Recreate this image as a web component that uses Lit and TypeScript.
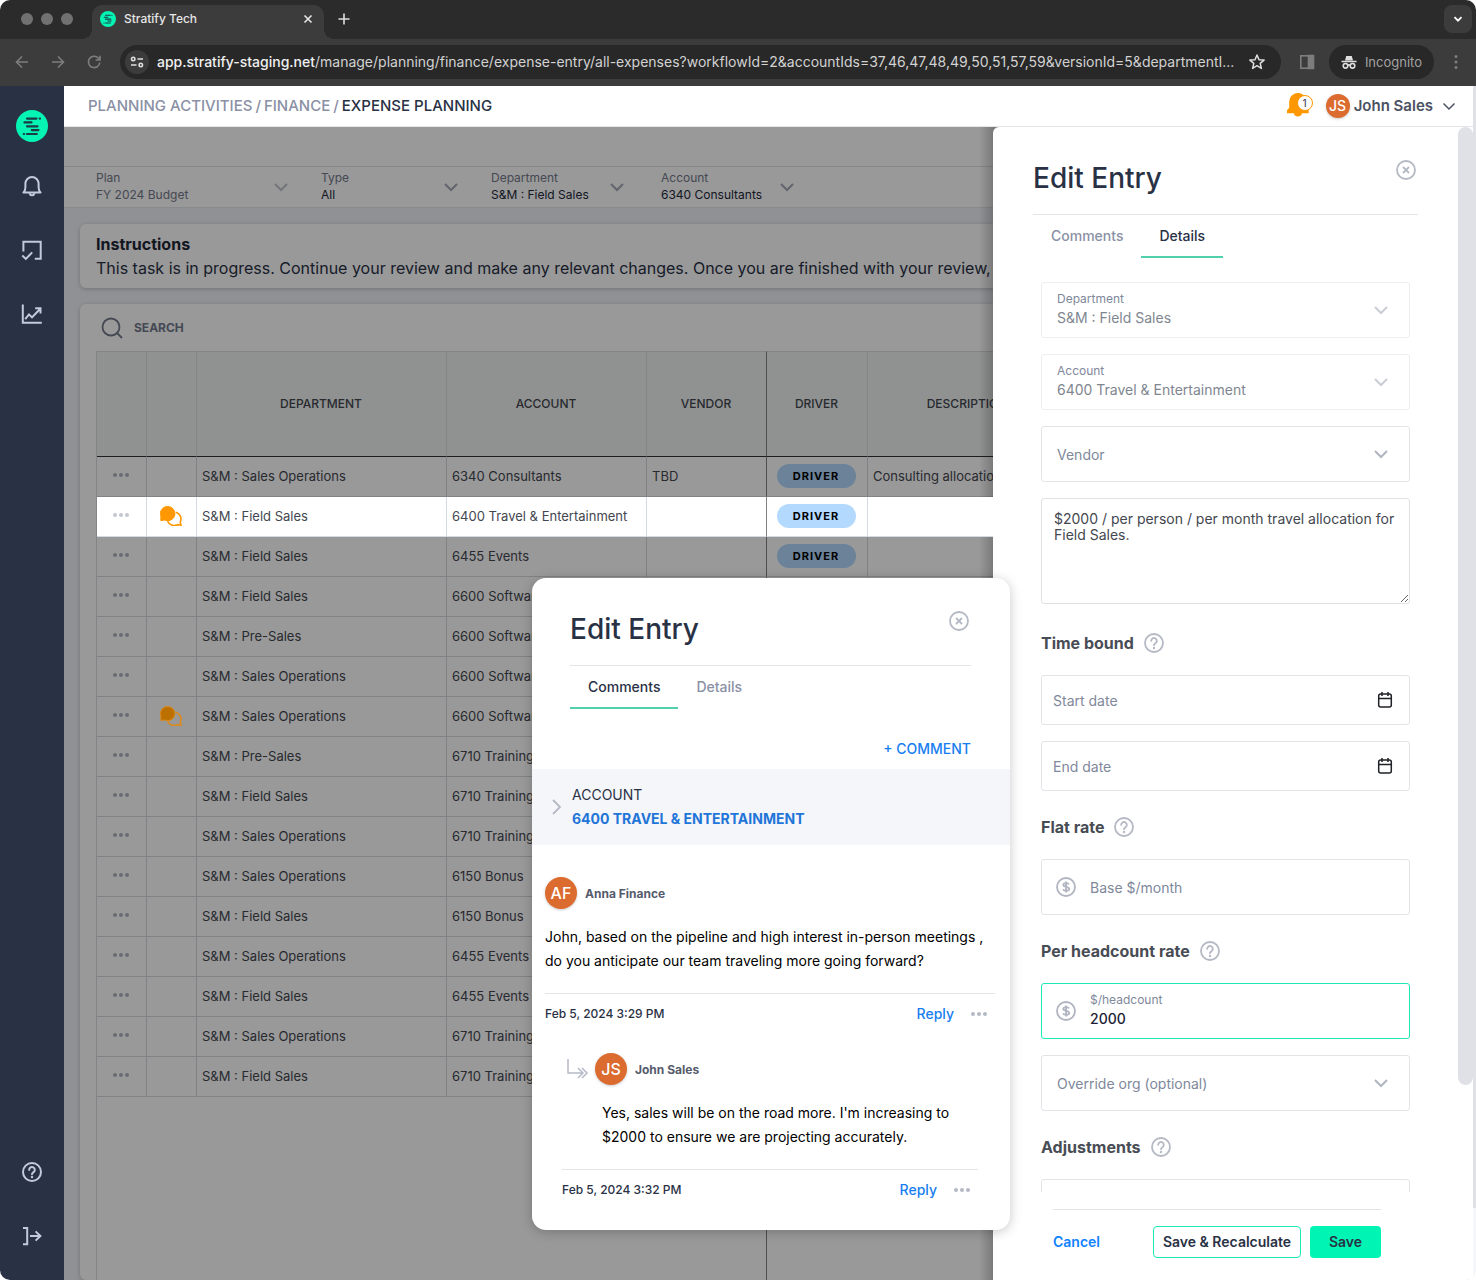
import { LitElement, html, svg, css, nothing } from "lit";
import { customElement } from "lit/decorators.js";
import { classMap } from "lit/directives/class-map.js";

interface Row {
  department: string;
  account: string;
  vendor?: string;
  driver?: boolean;
  description?: string;
  comments?: boolean;
  active?: boolean;
}

const OPS = "S&M : Sales Operations";
const FIELD = "S&M : Field Sales";
const PRE = "S&M : Pre-Sales";

const ROWS: Row[] = [
  { department: OPS, account: "6340 Consultants", vendor: "TBD", driver: true, description: "Consulting allocation" },
  { department: FIELD, account: "6400 Travel & Entertainment", driver: true, comments: true, active: true },
  { department: FIELD, account: "6455 Events", driver: true },
  { department: FIELD, account: "6600 Software" },
  { department: PRE, account: "6600 Software" },
  { department: OPS, account: "6600 Software" },
  { department: OPS, account: "6600 Software", comments: true },
  { department: PRE, account: "6710 Training" },
  { department: FIELD, account: "6710 Training" },
  { department: OPS, account: "6710 Training" },
  { department: OPS, account: "6150 Bonus" },
  { department: FIELD, account: "6150 Bonus" },
  { department: OPS, account: "6455 Events" },
  { department: FIELD, account: "6455 Events" },
  { department: OPS, account: "6710 Training" },
  { department: FIELD, account: "6710 Training" },
];

const icon = (size: number, body: unknown, width = 2, box = 24) => html`<svg
  class="icon" width=${size} height=${size} viewBox="0 0 ${box} ${box}" fill="none"
  stroke="currentColor" stroke-width=${width} aria-hidden="true">${body}</svg>`;

const logo = (size: number) => html`<svg class="icon" width=${size} height=${size} viewBox="0 0 32 32" aria-hidden="true">
  <circle cx="16" cy="16" r="16" fill="#05f3b3"></circle>
  <g stroke="#1d3a47" stroke-width="2.2" stroke-linecap="round">
    <path d="M11 8.6H20.5M23.7 8.6H24M8.5 12.4H15.5M11 16.3H21.5M15.8 20.1H22.4M7.8 24H8.1M11 24H20.8"></path>
  </g>
</svg>`;

const bell = svg`<path d="M3.4 18.6h17.2c-1.5-1.6-2-2.8-2-5.1V9.6a6.6 6.6 0 0 0-13.2 0v3.9c0 2.3-.5 3.5-2 5.1z" stroke-linejoin="round"/><path d="M9.4 19.2a2.7 2.7 0 0 0 5.2 0"/>`;
const task = svg`<path d="M3.4 13.6V3.8h17.3v16.9h-5.9"/><path d="M2.3 17.6 5.8 20.9 12.2 14.4"/>`;
const chart = svg`<path d="M2.8 2.4v18.3h19"/><path d="M5.2 17.2 9 12.4l3 3 7.8-8.2M15.2 6.2h5.3v5.3"/>`;
const help = svg`<circle cx="12" cy="12" r="9"/><path d="M9.2 9.9a2.8 2.8 0 1 1 4.4 2.2c-1 .7-1.6 1.1-1.6 2.1" stroke-linecap="round"/><circle cx="12" cy="17" r="1.2" fill="currentColor" stroke="none"/>`;
const leave = svg`<path d="M3 4h4.2v16.2H3M10 12h10.4M15.6 7.4l4.8 4.6-4.8 4.6"/>`;
const closeRing = svg`<circle cx="12" cy="12" r="9"/><path d="M9 9l6 6M15 9l-6 6"/>`;
const down = svg`<path d="M6 9l6 6 6-6"/>`;
const dots = svg`<g fill="currentColor" stroke="none"><circle cx="6" cy="12" r="2"/><circle cx="12" cy="12" r="2"/><circle cx="18" cy="12" r="2"/></g>`;
const dollar = svg`<circle cx="12" cy="12" r="9"/><path d="M15 9.4c-.5-.9-1.5-1.3-2.8-1.3-1.7 0-2.9.7-2.9 1.9 0 2.7 5.9 1.2 5.9 4 0 1.2-1.3 1.9-3 1.9-1.5 0-2.7-.5-3.2-1.5M12.1 6.5v11"/>`;
const calendar = svg`<rect x="5.7" y="6" width="12.6" height="13" rx="2"/><path d="M5.7 10.5h12.6M9 4v4M15 4v4"/>`;

const commentIcon = (muted: boolean) => html`<svg class="icon bubbles" width="22" height="20" viewBox="0 0 22 20" aria-hidden="true">
  <path d="M15.8 6.2a6.9 6.9 0 0 1 4.4 9.8l.8 3.2-3.6-.6a7 7 0 0 1-9.9-3.6" fill="none"
    stroke=${muted ? "#dc8a1c" : "#ff9800"} stroke-width="1.6"></path>
  <path d="M7.8.5a7.1 7.1 0 1 1-3 13.5L.8 14.6.9 10.2A7.1 7.1 0 0 1 7.8.5z"
    fill=${muted ? "#bb7000" : "#ff9800"} stroke=${muted ? "#dc8a1c" : "#ff9800"} stroke-width="1"></path>
</svg>`;

@customElement("browser-bar")
class BrowserBar extends LitElement {
  static styles = css`
    :host { display: block; color: #dedede; }
    .icon { display: block; flex: none; }
    button { background: none; border: 0; padding: 0; color: inherit; font: inherit; display: flex; align-items: center; justify-content: center; }
    .strip { display: flex; align-items: flex-end; height: 39px; background: #2b2b2b; padding-right: 4px; }
    .lights { display: flex; gap: 8px; padding: 0 19px 14px 21px; }
    .light { width: 12px; height: 12px; border-radius: 50%; background: #717171; }
    .tab { position: relative; display: flex; align-items: center; width: 232px; height: 34px; box-sizing: border-box; padding: 0 10px 6px 8px; background: #3c3c3c; border-radius: 10px 10px 0 0; font-size: 12px; font-weight: 500; gap: 8px; color: #e6e6e6; }
    .tab::before, .tab::after { content: ""; position: absolute; bottom: 0; width: 10px; height: 10px; }
    .tab::before { left: -10px; background: radial-gradient(circle at 0 0, #2b2b2b 10px, #3c3c3c 10px); }
    .tab::after { right: -10px; background: radial-gradient(circle at 100% 0, #2b2b2b 10px, #3c3c3c 10px); }
    .title { flex: 1; padding-bottom: 2px; }
    .plus { width: 24px; height: 40px; margin-left: 8px; }
    .menu { width: 28px; height: 28px; border-radius: 8px; background: #3c3c3c; margin: 0 0 6px auto; color: #fff; }
    .bar { display: flex; align-items: center; height: 47px; background: #3c3c3c; padding: 0 8px 2px 10px; box-sizing: border-box; }
    .nav { display: flex; gap: 12px; color: #7d7d7d; margin-right: 14px; }
    .nav button { width: 24px; height: 24px; }
    .address { display: flex; align-items: center; flex: 1; min-width: 0; height: 34px; border-radius: 17px; background: #282828; padding: 0 15px 0 5px; margin-right: 14px; box-sizing: border-box; }
    .site { width: 24px; height: 24px; border-radius: 50%; background: #3c3c3c; margin-right: 8px; flex: none; }
    .url { flex: 1; min-width: 0; white-space: nowrap; overflow: hidden; font-size: 14px; line-height: 20px; color: #d2d2d2; outline: none; }
    .host { color: #f0f0f0; font-weight: 500; }
    .panel { width: 24px; height: 24px; color: #7d7d7d; margin-right: 10px; }
    .incognito { display: flex; align-items: center; gap: 7px; height: 34px; padding: 0 12px 0 11px; border-radius: 17px; background: #282828; font-size: 13px; color: #a2a2a2; margin-right: 10px; }
    .incognito .icon { color: #dedede; }
    .more { width: 24px; height: 24px; color: #7d7d7d; }
  `;

  render() {
    return html`
      <div class="strip">
        <div class="lights"><span class="light"></span><span class="light"></span><span class="light"></span></div>
        <div class="tab">
          ${logo(16)}<span class="title">Stratify Tech</span>
          <button aria-label="Close tab">${icon(12, svg`<path d="M2.5 2.5l7 7M9.5 2.5l-7 7"/>`, 1.6, 12)}</button>
        </div>
        <button class="plus" aria-label="New tab">${icon(12, svg`<path d="M6 .5v11M.5 6h11"/>`, 1.6, 12)}</button>
        <button class="menu" aria-label="Search tabs">${icon(12, svg`<path d="M2.5 4.2 6 7.7l3.5-3.5"/>`, 1.8, 12)}</button>
      </div>
      <div class="bar">
        <div class="nav">
          <button aria-label="Back">${icon(16, svg`<path d="M14 8H2.5M8 2.5 2.5 8 8 13.5"/>`, 1.6, 16)}</button>
          <button aria-label="Forward">${icon(16, svg`<path d="M2 8h11.5M8 2.5 13.5 8 8 13.5"/>`, 1.6, 16)}</button>
          <button aria-label="Reload">${icon(16, svg`<path d="M13.8 8.5A5.7 5.7 0 1 1 12.3 4l1.5 1.6M14 1.8v4.2H9.6"/>`, 1.6, 16)}</button>
        </div>
        <div class="address">
          <button class="site" aria-label="Site settings">${icon(14, svg`<circle cx="3.2" cy="4" r="1.7"/><path d="M7.5 4H13M1 10h5.5"/><circle cx="10.8" cy="10" r="1.7"/>`, 1.6, 14)}</button>
          <div class="url" role="textbox" aria-label="Address" contenteditable="true"><span class="host">app.stratify-staging.net</span>/manage/planning/finance/expense-entry/all-expenses?workflowId=2&accountIds=37,46,47,48,49,50,51,57,59&versionId=5&departmentI...</div>
          <button aria-label="Bookmark">${icon(18, svg`<path d="M9 2l2 4.7 5.1.4-3.9 3.3 1.2 5L9 12.7l-4.4 2.7 1.2-5L1.9 7.1 7 6.7z" stroke-linejoin="round"/>`, 1.5, 18)}</button>
        </div>
        <button class="panel" aria-label="Side panel">${icon(16, svg`<rect x="1.8" y="1.8" width="12.4" height="12.4"/><path d="M9.5 1.5h5v13h-5z" fill="currentColor"/>`, 1.6, 16)}</button>
        <div class="incognito">${icon(18, svg`<path d="M5 7.5 6.2 3h5.6L13 7.5z" fill="currentColor" stroke="none"/><path d="M1.5 8.5h15"/><circle cx="5.5" cy="12.8" r="2.3"/><circle cx="12.5" cy="12.8" r="2.3"/><path d="M7.6 12.3q1.4-.8 2.8 0"/>`, 1.6, 18)}<span>Incognito</span></div>
        <button class="more" aria-label="Browser menu">${icon(16, svg`<g fill="currentColor" stroke="none"><circle cx="8" cy="2.5" r="1.5"/><circle cx="8" cy="8" r="1.5"/><circle cx="8" cy="13.5" r="1.5"/></g>`, 1, 16)}</button>
      </div>
    `;
  }
}

@customElement("app-root")
class AppRoot extends LitElement {
  static styles = css`
    :host { display: block; font-family: Inter, "Liberation Sans", sans-serif; background: #fff; }
    * { box-sizing: border-box; }
    .icon { display: block; flex: none; }
    button, select, input, textarea { font: inherit; color: inherit; background: none; border: 0; padding: 0; margin: 0; outline: none; }
    button { display: flex; align-items: center; justify-content: center; }
    select { appearance: none; opacity: 1; }
    h1, h2, p { margin: 0; }
    a { color: inherit; text-decoration: none; }
    .window { display: flex; flex-direction: column; height: 100vh; border-radius: 10px; overflow: hidden; }
    .app { flex: 1; min-height: 0; display: flex; }

    .side { width: 64px; background: #293145; color: #c3cadb; display: flex; flex-direction: column; padding: 24px 0 12px; }
    .brand { display: flex; justify-content: center; padding-bottom: 12px; }
    .side button { width: 64px; height: 64px; }
    .side .push { margin-top: auto; }

    .page { flex: 1; min-width: 0; display: flex; flex-direction: column; }
    .rail { width: 3px; background: #f6f7fa; }
    .rail-thumb { height: 94%; background: #e0e1e6; }
    .top { display: flex; align-items: center; height: 41px; border-bottom: 1px solid #e5e6ea; padding: 0 16px 0 24px; color: #293145; font-size: 15px; }
    .crumbs { display: flex; gap: 3px; font-weight: 500; color: #8a90a5; padding-bottom: 2px; }
    .crumbs .here { color: #293145; }
    .account { margin-left: auto; display: flex; align-items: center; font-weight: 600; color: #4b5163; }
    .alert { position: relative; width: 26px; height: 26px; margin-right: 13px; }
    .count { position: absolute; left: 10px; top: 2px; width: 16px; height: 16px; border-radius: 50%; border: 1px solid #ff9800; background: #fff; font-size: 10px; line-height: 14px; text-align: center; font-weight: 500; }
    .avatar { width: 32px; height: 32px; border-radius: 50%; background: #db6b2e; color: #fff; font-size: 16px; font-weight: 500; line-height: 32px; text-align: center; flex: none; box-shadow: 0 1px 3px rgba(0, 0, 0, 0.2); }
    .avatar.small { width: 24px; height: 24px; line-height: 24px; font-size: 14px; margin-right: 4px; }
    .person { padding-bottom: 1px; }
    .account .icon { margin-left: 8px; }
    .account .alert .icon { margin: 0; }

    .stage { position: relative; flex: 1; min-height: 0; display: flex; flex-direction: column; overflow: hidden; background: #f0f2f8; }
    .band { height: 40px; flex: none; background: #fff; border-bottom: 1px solid #dfe2e8; }
    .filters { display: flex; height: 41px; flex: none; background: #fff; border-bottom: 1px solid #e2e4ea; padding-left: 32px; font-size: 12px; color: #23283a; }
    .filter { display: flex; align-items: center; width: 170px; padding-right: 32px; }
    .filter.wide { width: 225px; }
    .filter.wide, .filter.mid { padding-right: 28px; }
    .filter div { flex: 1; min-width: 0; padding-bottom: 2px; }
    .filter label { display: block; line-height: 17px; color: #747a8b; }
    .filter select { display: block; width: 100%; height: 17px; line-height: 17px; }
    .filter select:disabled { color: #747a8b; }
    .filter .icon { color: #a3a8b6; }
    .filter.wide .icon { color: #c0c4ce; }
    .cards { flex: 1; min-height: 0; display: flex; flex-direction: column; gap: 16px; padding: 16px 0 0 16px; }
    .card { background: #fff; border-radius: 6px 0 0 6px; box-shadow: 0 1px 4px rgba(30, 35, 60, 0.25); padding: 0 16px; }
    .note { height: 64px; flex: none; padding-top: 8px; font-size: 16px; line-height: 24px; color: #293145; white-space: nowrap; overflow: hidden; }
    .note h2 { font-size: 16px; font-weight: 700; color: #1f2636; }
    .sheet { flex: 1; min-height: 0; display: flex; flex-direction: column; padding-right: 0; }
    .search { display: flex; align-items: center; height: 47px; gap: 10px; padding-left: 4px; color: #747a8b; flex: none; }
    .search input { font-size: 12px; font-weight: 700; width: 200px; }
    .search input::placeholder { color: #747a8b; opacity: 1; }
    .grid { flex: 1; min-height: 0; display: flex; flex-direction: column; border-left: 1px solid #d9dce2; }
    table { table-layout: fixed; width: 971px; border-spacing: 0; font-size: 13px; color: #43474f; flex: none; }
    th { height: 106px; padding: 0 1px 2px 0; background: #eff3f2; border: 0 solid #d9dde2; border-width: 1px 1px 1px 0; border-bottom-color: #2d3136; font-size: 12px; font-weight: 500; color: #43474f; }
    td { height: 40px; padding: 0 4px 1px 5px; border: 0 solid #d5d9e0; border-width: 0 1px 1px 0; white-space: nowrap; overflow: hidden; }
    td.split, th.split { border-right-color: #828282; }
    td.mid { padding: 0 2px 2px 0; }
    .mid > * { margin: 0 auto; }
    .actions { color: #b0b4bf; width: 24px; height: 24px; padding-bottom: 2px; }
    .c-menu, .c-chat { width: 50px; }
    .c-dept { width: 250px; }
    .c-acct { width: 200px; }
    .c-vend { width: 120px; }
    .c-driv { width: 101px; }
    .active { position: relative; z-index: 2; }
    .active td { background: #fff; }
    .active .actions { color: #c3c7d0; }
    .bubbles { position: relative; z-index: 2; }
    .pill { display: block; width: 79px; height: 24px; border-radius: 12px; background: #b3d9ff; color: #000; font-size: 11px; font-weight: 700; letter-spacing: 1px; line-height: 24px; text-align: center; }
    .rest { flex: 1; width: 670px; border-right: 1px solid #828282; }
    .scrim { position: absolute; inset: 0 470px 0 0; z-index: 1; background: linear-gradient(to left, rgba(0, 0, 0, 0.2) 10px, transparent 24px), rgba(0, 0, 0, 0.4); }

    .drawer { position: absolute; top: 0; right: 0; bottom: 0; width: 480px; z-index: 3; background: #fff; border-top-left-radius: 6px; display: flex; flex-direction: column; }
    .body { flex: 1; min-height: 0; overflow: hidden; padding: 31px 55px 0 40px; }
    .thumb { position: absolute; right: 0; top: 0; bottom: 195px; width: 15px; border-radius: 8px; background: #e0e1e6; }
    .head { display: flex; justify-content: space-between; align-items: flex-start; padding-bottom: 16px; border-bottom: 1px solid #e4e5e9; color: #293145; }
    .head h1 { font-size: 28px; font-weight: 500; line-height: 40px; }
    .head button { color: #b4b9c4; }
    .tabs { display: flex; font-size: 14px; font-weight: 500; color: #8a90a5; }
    .tabs button { height: 43px; padding: 0 18px; border-bottom: 2px solid transparent; }
    .tabs .on { color: #293145; border-color: #51d0ad; }
    .form { display: flex; flex-direction: column; gap: 16px; padding: 24px 8px 0; font-size: 14px; color: #80889b; }
    .field { display: flex; align-items: center; height: 56px; flex: none; border: 1px solid #e2e4e8; border-radius: 3px; padding: 0 16px 0 15px; }
    .field.off { border-color: #edeef1; }
    .field.off > .icon { opacity: 0.65; }
    .field > .icon { color: #b0b5c1; }
    .field .stack { flex: 1; min-width: 0; }
    .field label { display: block; font-size: 12px; line-height: 16px; }
    .field select, .field input { display: block; width: 100%; height: 20px; line-height: 20px; margin-top: 1px; }
    .field label + select, .field label + input { margin-bottom: 2px; }
    .field select:disabled { color: #80868f; }
    .field input::placeholder { color: #80889b; opacity: 1; }
    .field.date { height: 50px; padding: 0 12px 0 11px; }
    .field.date .icon { color: #1f2227; }
    .field.money { padding-left: 12px; gap: 12px; }
    .field.focus { border-color: #1de9b6; }
    .field.focus input { color: #1c2233; font-weight: 500; }
    .memo { display: block; width: 100%; height: 106px; margin-bottom: 3px; border: 1px solid #dfe1e5; border-radius: 3px; padding: 12px; line-height: 16px; color: #43474f; resize: vertical; flex: none; }
    .section { display: flex; align-items: center; gap: 8px; height: 36px; padding: 8px 0 4px; flex: none; font-size: 16px; font-weight: 700; color: #484c54; }
    .section .icon { color: #b4b9c4; }
    .foot { display: flex; align-items: center; gap: 9px; margin: 17px 92px 0 60px; padding: 16px 0 22px; border-top: 1px solid #e2e3e7; font-size: 14px; font-weight: 600; flex: none; }
    .foot button { height: 32px; padding-bottom: 2px; border-radius: 4px; color: #293145; }
    .foot .cancel { color: #0f82ff; margin-right: auto; }
    .foot .recalc { width: 148px; border: 1px solid #1de9b6; }
    .foot .save { width: 71px; background: #00f5b4; }

    .popup { position: absolute; right: 463px; bottom: 50px; width: 478px; z-index: 4; background: #fff; border-radius: 14px; box-shadow: 0 2px 12px rgba(0, 0, 0, 0.22); padding: 31px 0 21px; font-size: 14px; color: #000; }
    .popup-head { padding: 0 39px 0 38px; }
    .add { display: flex; justify-content: flex-end; padding: 28px 39px 8px; }
    .add button, .reply-link { color: #177ef0; font-weight: 500; line-height: 24px; }
    .target { display: flex; align-items: center; gap: 4px; background: #f5f6fa; padding: 14px 12px; line-height: 24px; color: #293145; }
    .target .expand { color: #b4b9c4; }
    .target a { display: block; color: #1f75d8; font-weight: 700; }
    .thread { padding: 32px 15px 0 13px; }
    .who { display: flex; align-items: center; gap: 8px; font-size: 12px; font-weight: 700; color: #555b6b; }
    .say { padding: 16px 0 20px; line-height: 24px; }
    .meta { display: flex; align-items: center; height: 40px; border-top: 1px solid #e4e5e9; font-size: 12px; font-weight: 500; color: #293145; }
    .meta .reply-link { margin-left: auto; font-size: 14px; }
    .meta .dots { width: 24px; height: 24px; margin: 0 4px 0 13px; color: #b4b9c4; }
    .nested { margin: 20px 17px 0; }
    .nested .who { padding-left: 4px; }
    .nested .who .icon { color: #b6bac9; margin-right: -3px; }
    .nested .say { padding-left: 40px; }
  `;

  private panelHead(active: string) {
    return html`
      <header class="head">
        <h1>Edit Entry</h1>
        <button aria-label="Close">${icon(24, closeRing, 1.8)}</button>
      </header>
      <div class="tabs" role="tablist">
        ${["Comments", "Details"].map((name) => html`<button role="tab" aria-selected=${name === active}
          class=${classMap({ on: name === active })}>${name}</button>`)}
      </div>`;
  }

  private filter(id: string, label: string, value: string, size: string, disabled = false) {
    return html`<div class="filter ${size}">
      <div><label for=${id}>${label}</label>
        <select id=${id} ?disabled=${disabled}><option>${value}</option></select></div>
      ${icon(24, down)}
    </div>`;
  }

  private row(r: Row) {
    return html`<tr class=${classMap({ active: !!r.active })}>
      <td class="mid"><button class="actions" aria-label="Row actions">${icon(24, dots)}</button></td>
      <td class="mid">${r.comments ? commentIcon(!r.active) : nothing}</td>
      <td>${r.department}</td>
      <td>${r.account}</td>
      <td class="split">${r.vendor ?? nothing}</td>
      <td class="mid">${r.driver ? html`<span class="pill">DRIVER</span>` : nothing}</td>
      <td>${r.description ?? nothing}</td>
    </tr>`;
  }

  private section(title: string) {
    return html`<div class="section"><span>${title}</span><button aria-label="About ${title}">${icon(24, help, 1.8)}</button></div>`;
  }

  private picker(id: string, label: string, value: string) {
    return html`<div class="field off">
      <div class="stack"><label for=${id}>${label}</label>
        <select id=${id} disabled><option>${value}</option></select></div>
      ${icon(24, down)}
    </div>`;
  }

  private emptyPicker(label: string) {
    return html`<div class="field"><div class="stack"><select aria-label=${label}><option>${label}</option></select></div>${icon(24, down)}</div>`;
  }

  private dateField(label: string) {
    return html`<div class="field date"><div class="stack"><input aria-label=${label} placeholder=${label} /></div>${icon(24, calendar, 1.5)}</div>`;
  }

  render() {
    return html`
      <div class="window">
        <browser-bar></browser-bar>
        <div class="app">
          <nav class="side" aria-label="Main">
            <a class="brand" href="#" aria-label="Stratify">${logo(32)}</a>
            <button aria-label="Notifications">${icon(24, bell)}</button>
            <button aria-label="Tasks">${icon(24, task)}</button>
            <button aria-label="Reports">${icon(24, chart)}</button>
            <button class="push" aria-label="Help">${icon(24, help)}</button>
            <button aria-label="Sign out">${icon(24, leave)}</button>
          </nav>
          <div class="page">
            <header class="top">
              <nav class="crumbs" aria-label="Breadcrumb">
                <a href="#">PLANNING ACTIVITIES</a><span>/</span><a href="#">FINANCE</a><span>/</span><span class="here">EXPENSE PLANNING</span>
              </nav>
              <div class="account">
                <button class="alert" aria-label="Alerts">
                  <svg class="icon" width="26" height="26" viewBox="0 0 26 26" aria-hidden="true"><path fill="#ff9800" d="M11 0a8.5 8.5 0 0 1 8.7 8.5v6.2l2 2.6v3H15a4.2 4.2 0 0 1-8.2 0H0v-3l2.200-2.600V8.500A8.500 8.500 0 0 1 11 0z"></path></svg>
                  <span class="count">1</span>
                </button>
                <span class="avatar small">JS</span><span class="person">John Sales</span>
                ${icon(16, svg`<path d="M2.5 5.5 8 11l5.5-5.5"/>`, 1.5, 16)}
              </div>
            </header>
            <div class="stage">
              <div class="band"></div>
              <div class="filters">
                ${this.filter("plan", "Plan", "FY 2024 Budget", "wide", true)}
                ${this.filter("type", "Type", "All", "mid")}
                ${this.filter("dept", "Department", FIELD, "")}
                ${this.filter("acct", "Account", "6340 Consultants", "")}
              </div>
              <div class="cards">
                <section class="card note">
                  <h2>Instructions</h2>
                  <p>This task is in progress. Continue your review and make any relevant changes. Once you are finished with your review,</p>
                </section>
                <section class="card sheet">
                  <div class="search">
                    ${icon(24, svg`<circle cx="11" cy="11" r="8.5"/><path d="M17 17l5 5"/>`, 1.8)}
                    <input type="search" aria-label="Search" placeholder="SEARCH" />
                  </div>
                  <div class="grid">
                    <table>
                      <thead><tr>
                        <th class="c-menu"></th><th class="c-chat"></th><th class="c-dept">DEPARTMENT</th>
                        <th class="c-acct">ACCOUNT</th><th class="c-vend split">VENDOR</th>
                        <th class="c-driv">DRIVER</th><th>DESCRIPTION</th>
                      </tr></thead>
                      <tbody>${ROWS.map((r) => this.row(r))}</tbody>
                    </table>
                    <div class="rest"></div>
                  </div>
                </section>
              </div>
              <div class="scrim"></div>

              <aside class="drawer">
                <div class="body">
                  ${this.panelHead("Details")}
                  <div class="form">
                    ${this.picker("e-dept", "Department", FIELD)}
                    ${this.picker("e-acct", "Account", "6400 Travel & Entertainment")}
                    ${this.emptyPicker("Vendor")}
                    <textarea class="memo" aria-label="Description" .value=${"$2000 / per person / per month travel allocation for Field Sales."}></textarea>
                    ${this.section("Time bound")}
                    ${this.dateField("Start date")}
                    ${this.dateField("End date")}
                    ${this.section("Flat rate")}
                    <div class="field money">${icon(24, dollar, 1.8)}<div class="stack"><input aria-label="Base $/month" placeholder="Base $/month" /></div></div>
                    ${this.section("Per headcount rate")}
                    <div class="field money focus">${icon(24, dollar, 1.8)}<div class="stack"><label for="head">$/headcount</label><input id="head" .value=${"2000"} /></div></div>
                    ${this.emptyPicker("Override org (optional)")}
                    ${this.section("Adjustments")}
                    <div class="field"></div>
                  </div>
                </div>
                <div class="thumb"></div>
                <footer class="foot">
                  <button class="cancel">Cancel</button>
                  <button class="recalc">Save &amp; Recalculate</button>
                  <button class="save">Save</button>
                </footer>
              </aside>

              <section class="popup">
                <div class="popup-head">${this.panelHead("Comments")}</div>
                <div class="add"><button>+ COMMENT</button></div>
                <div class="target">
                  <button class="expand" aria-label="Expand">${icon(24, svg`<path d="M9 5l7 7-7 7"/>`, 1.8)}</button>
                  <div>ACCOUNT<a href="#">6400 TRAVEL &amp; ENTERTAINMENT</a></div>
                </div>
                <div class="thread">
                  <div class="who"><span class="avatar">AF</span><span>Anna Finance</span></div>
                  <p class="say">John, based on the pipeline and high interest in-person meetings , do you anticipate our team traveling more going forward?</p>
                  <div class="meta"><span>Feb 5, 2024 3:29 PM</span><button class="reply-link">Reply</button><button class="dots" aria-label="Comment actions">${icon(24, dots)}</button></div>
                  <div class="nested">
                    <div class="who">${icon(24, svg`<path d="M2 2v14h15M12 11l5 5-5 5M16 11l5 5-5 5"/>`, 1.5)}<span class="avatar">JS</span><span>John Sales</span></div>
                    <p class="say">Yes, sales will be on the road more. I'm increasing to $2000 to ensure we are projecting accurately.</p>
                    <div class="meta"><span>Feb 5, 2024 3:32 PM</span><button class="reply-link">Reply</button><button class="dots" aria-label="Comment actions">${icon(24, dots)}</button></div>
                  </div>
                </div>
              </section>
            </div>
          </div>
          <div class="rail"><div class="rail-thumb"></div></div>
        </div>
      </div>
    `;
  }
}
